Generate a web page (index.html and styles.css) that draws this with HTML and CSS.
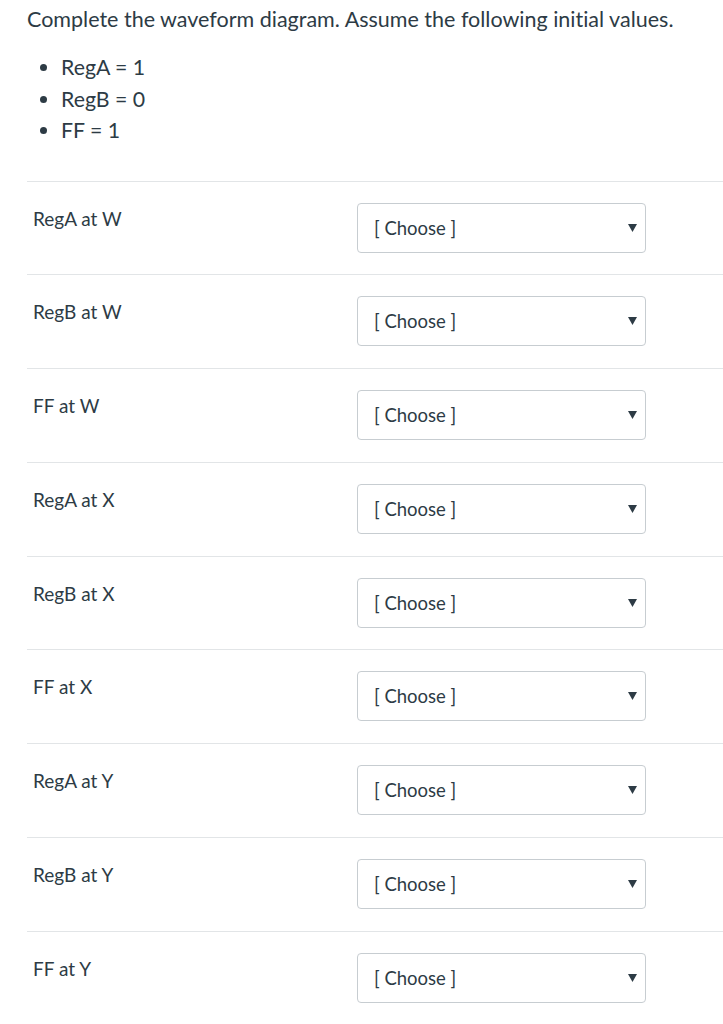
FILE: index.html
```html
<!DOCTYPE html>
<html>
<head>
<meta charset="utf-8">
<link rel="stylesheet" href="styles.css">
</head>
<body>
<div class="page">
  <p class="question">Complete the waveform diagram. Assume the following initial values.</p>
  <ul class="values">
    <li>RegA = 1</li>
    <li>RegB = 0</li>
    <li>FF = 1</li>
  </ul>
  <div class="answers">
    <div class="row"><div class="label">RegA at W</div><div class="select"><span>[ Choose ]</span><svg class="arrow" width="9" height="8" viewBox="0 0 9 8"><path d="M0 0H9L4.5 8Z" fill="#2d3b45"/></svg></div></div>
    <div class="row"><div class="label">RegB at W</div><div class="select"><span>[ Choose ]</span><svg class="arrow" width="9" height="8" viewBox="0 0 9 8"><path d="M0 0H9L4.5 8Z" fill="#2d3b45"/></svg></div></div>
    <div class="row"><div class="label">FF at W</div><div class="select"><span>[ Choose ]</span><svg class="arrow" width="9" height="8" viewBox="0 0 9 8"><path d="M0 0H9L4.5 8Z" fill="#2d3b45"/></svg></div></div>
    <div class="row"><div class="label">RegA at X</div><div class="select"><span>[ Choose ]</span><svg class="arrow" width="9" height="8" viewBox="0 0 9 8"><path d="M0 0H9L4.5 8Z" fill="#2d3b45"/></svg></div></div>
    <div class="row"><div class="label">RegB at X</div><div class="select"><span>[ Choose ]</span><svg class="arrow" width="9" height="8" viewBox="0 0 9 8"><path d="M0 0H9L4.5 8Z" fill="#2d3b45"/></svg></div></div>
    <div class="row"><div class="label">FF at X</div><div class="select"><span>[ Choose ]</span><svg class="arrow" width="9" height="8" viewBox="0 0 9 8"><path d="M0 0H9L4.5 8Z" fill="#2d3b45"/></svg></div></div>
    <div class="row"><div class="label">RegA at Y</div><div class="select"><span>[ Choose ]</span><svg class="arrow" width="9" height="8" viewBox="0 0 9 8"><path d="M0 0H9L4.5 8Z" fill="#2d3b45"/></svg></div></div>
    <div class="row"><div class="label">RegB at Y</div><div class="select"><span>[ Choose ]</span><svg class="arrow" width="9" height="8" viewBox="0 0 9 8"><path d="M0 0H9L4.5 8Z" fill="#2d3b45"/></svg></div></div>
    <div class="row"><div class="label">FF at Y</div><div class="select"><span>[ Choose ]</span><svg class="arrow" width="9" height="8" viewBox="0 0 9 8"><path d="M0 0H9L4.5 8Z" fill="#2d3b45"/></svg></div></div>
  </div>
</div>
</body>
</html>
```

FILE: styles.css
```css
html, body {
  margin: 0;
  padding: 0;
  background: #ffffff;
}
body {
  font-family: Lato, "Open Sans", sans-serif;
  color: #2d3b45;
  font-variant-ligatures: none;
}
.page {
  padding-left: 27px;
}
.question {
  margin: 0;
  padding-top: 4px;
  font-size: 21.5px;
  line-height: 30px;
}
.values {
  margin: 18px 0 0 0;
  padding-left: 34px;
  font-size: 21.3px;
  line-height: 31.5px;
}
.answers {
  margin-top: 34px;
}
.row {
  display: flex;
  align-items: flex-start;
  border-top: 1px solid #e2e5e7;
  height: 93.75px;
  box-sizing: border-box;
}
.label {
  width: 324px;
  padding-left: 6px;
  padding-top: 26px;
  font-size: 19px;
  line-height: 22px;
}
.select {
  margin-top: 21px;
  width: 289px;
  height: 50px;
  box-sizing: border-box;
  border: 1px solid #c7cdd1;
  border-radius: 4px;
  display: flex;
  align-items: center;
  justify-content: space-between;
  padding: 0 8px 0 16px;
  font-size: 18.5px;
}
.arrow {
  display: block;
}
```
